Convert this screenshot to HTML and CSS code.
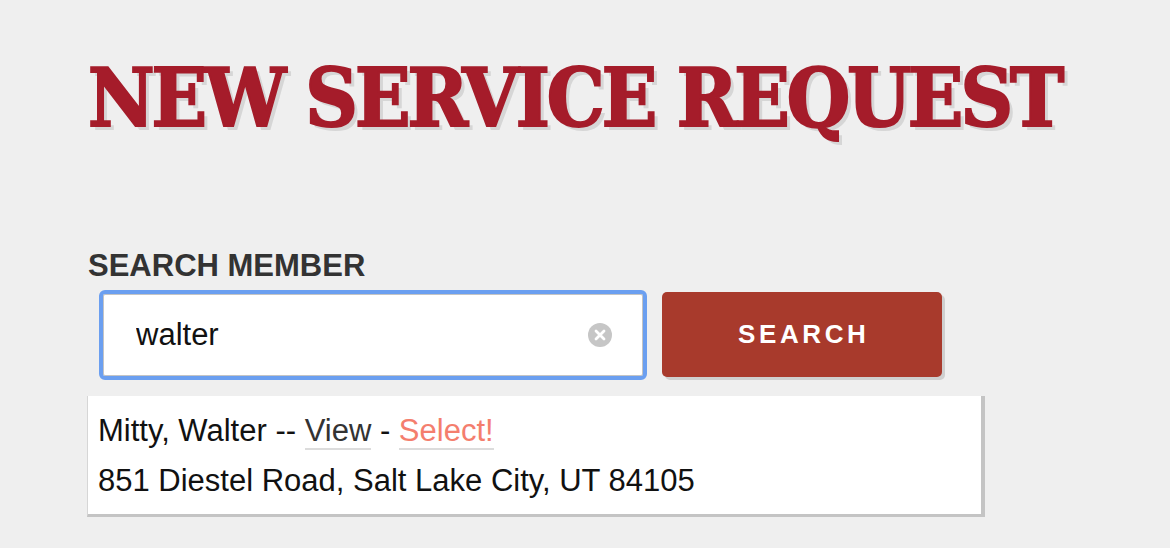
FILE: index.html
```html
<!DOCTYPE html>
<html>
<head>
<meta charset="utf-8">
<link rel="stylesheet" href="styles.css">
</head>
<body>
<main class="page">
  <h1 class="title">NEW SERVICE REQUEST</h1>
  <section class="search">
    <label class="search-label" for="member">SEARCH MEMBER</label>
    <div class="search-row">
      <div class="field">
        <input id="member" class="field-input" type="text" value="walter">
        <span class="clear" aria-hidden="true">
          <svg width="24" height="24" viewBox="0 0 24 24"><circle cx="12" cy="12" r="12" fill="#c6c6c6"/><path d="M8 8L16 16M16 8L8 16" stroke="#fff" stroke-width="2.8" stroke-linecap="round"/></svg>
        </span>
      </div>
      <button class="search-btn" type="button">SEARCH</button>
    </div>
    <div class="results">
      <div class="result-line">Mitty, Walter -- <a class="link view" href="#">View</a> - <a class="link select" href="#">Select!</a></div>
      <div class="result-line">851 Diestel Road, Salt Lake City, UT 84105</div>
    </div>
  </section>
</main>
</body>
</html>
```
FILE: styles.css
```css
html, body {
  margin: 0;
  padding: 0;
  background: #efefef;
}
body {
  font-family: "Liberation Sans", Arial, sans-serif;
  color: #111;
}
.page {
  padding: 48px 0 0 88px;
}
.title {
  margin: 0;
  font-family: "DejaVu Serif Condensed", "DejaVu Serif", serif;
  font-stretch: condensed;
  font-weight: bold;
  font-size: 81px;
  line-height: 100px;
  color: #a51c2a;
  text-shadow: 4px 4px 0 #d6d6d6;
  letter-spacing: -3px;
  white-space: nowrap;
  -webkit-text-stroke: 2px #a51c2a;
}
.search {
  margin-top: 100px;
}
.search-label {
  display: block;
  font-weight: bold;
  font-size: 31px;
  line-height: 36px;
  color: #333;
}
.search-row {
  display: flex;
  align-items: center;
  gap: 19px;
  margin-top: 8px;
  margin-left: 15px;
}
.field {
  position: relative;
  width: 540px;
  height: 82px;
  box-sizing: border-box;
  background: #fff;
  border: 1px solid #c4c4c4;
  outline: 4px solid #6b9ff0;
  border-radius: 2px;
}
.field-input {
  border: 0;
  outline: none;
  background: transparent;
  width: 100%;
  height: 100%;
  box-sizing: border-box;
  padding: 0 60px 0 32px;
  font-family: "Liberation Sans", Arial, sans-serif;
  font-size: 31px;
  color: #111;
}
.clear {
  position: absolute;
  right: 30px;
  top: 28px;
  width: 24px;
  height: 24px;
  line-height: 0;
}
.search-btn {
  width: 280px;
  height: 85px;
  border: 0;
  border-radius: 5px;
  background: #a83a2c;
  color: #fff;
  font-family: "Liberation Sans", Arial, sans-serif;
  font-weight: bold;
  font-size: 26px;
  letter-spacing: 3.6px;
  text-indent: 3.6px;
  box-shadow: 3px 3px 0 #cfcfcf;
  padding: 0;
}
.results {
  width: 898px;
  box-sizing: border-box;
  margin-top: 19px;
  margin-left: -1px;
  background: #fff;
  border-left: 1px solid #d6d6d6;
  border-right: 4px solid #c4c4c4;
  border-bottom: 3px solid #c4c4c4;
  padding: 10px 10px 8px 10px;
}
.result-line {
  font-size: 31px;
  line-height: 50px;
  color: #111;
}
.link {
  text-decoration: none;
  border-bottom: 2px solid #dcdcdc;
}
.view { color: #333; }
.select { color: #f47e6e; }
```
